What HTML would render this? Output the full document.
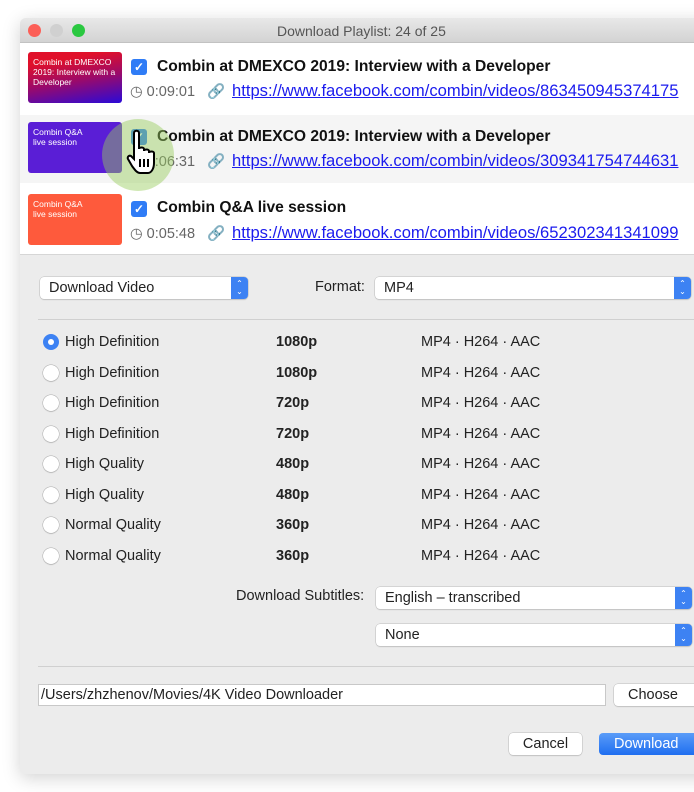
<!DOCTYPE html>
<html><head><style>
*{margin:0;padding:0;box-sizing:border-box}
body{width:694px;height:792px;background:#fff;position:relative;overflow:hidden;font-family:"Liberation Sans",sans-serif;}
.win{position:absolute;left:20px;top:18px;width:700px;height:756px;background:#ececec;border-radius:6px;box-shadow:0 4px 18px rgba(0,0,0,.18);overflow:hidden}
.title{position:absolute;left:0;top:0;width:100%;height:25px;background:linear-gradient(#e8e8e8,#d3d3d3);border-bottom:1px solid #c2c2c2;}
.title span{position:absolute;left:257px;top:5px;font-size:14px;color:#555}
.dot{position:absolute;top:6px;width:13px;height:13px;border-radius:50%}
.list{position:absolute;left:0;top:25px;width:100%;height:212px;background:#fff;border-bottom:1px solid #d6d6d6}
.a{position:absolute;}
.thumb{position:absolute;left:8px;width:94px;height:51px;border-radius:3px;color:#fff;font-size:8.5px;line-height:10px;padding:5px 5px}
.cb{position:absolute;left:111px;width:16px;height:16px;background:#2f7cf6;border-radius:3px;color:#fff;font-size:12px;line-height:16px;text-align:center;font-weight:bold}
.t{position:absolute;left:137px;font-size:15.6px;font-weight:bold;color:#111;white-space:nowrap}
.tm{position:absolute;left:110px;font-size:14.5px;color:#666;white-space:nowrap}
.u{position:absolute;left:212px;font-size:16.6px;color:#1b1bee;text-decoration:underline;white-space:nowrap}
.pop{position:absolute;height:22px;background:#fff;border-radius:4px;box-shadow:0 0 0 .5px #bbb,0 1px 1px rgba(0,0,0,.15);font-size:14.5px;color:#222;padding:3px 9px;white-space:nowrap}
.arr{position:absolute;right:0;top:0;width:17px;height:22px;background:#3d82f3;border-radius:0 4px 4px 0;color:#fff;font-size:8px;line-height:8px;text-align:center;padding-top:3px}
.r{position:absolute;font-size:14.5px;color:#222;white-space:nowrap}
.rad{position:absolute;left:23px;width:16px;height:16px;border-radius:50%;background:#fff;box-shadow:0 0 0 .5px #aaa,0 1px 1px rgba(0,0,0,.15)}
.sep{position:absolute;left:18px;width:700px;height:1px;background:#d0d0d0}
.btn{position:absolute;height:22px;background:#fff;border-radius:4px;box-shadow:0 0 0 .5px #bbb,0 1px 1px rgba(0,0,0,.15);font-size:14.5px;color:#222;text-align:center;line-height:22px}
</style></head><body>
<div class="win">
<div class="title">
<div class="dot" style="left:8px;background:#fc5f57"></div>
<div class="dot" style="left:30px;background:#d0d0d0"></div>
<div class="dot" style="left:52px;background:#2ac840"></div>
<span>Download Playlist: 24 of 25</span></div>
<div class="list">
<div class="a" style="left:0;top:72px;width:100%;height:68px;background:#f5f5f5"></div>
<div class="thumb" style="top:9px;background:linear-gradient(170deg,#e0102a 20%,#9b0a6a 55%,#2a0ad8 100%)">Combin at DMEXCO 2019: Interview with a Developer</div>
<div class="thumb" style="top:79px;background:#5a1ed6">Combin Q&amp;A<br>live session</div>
<div class="thumb" style="top:151px;background:#fe5a3c">Combin Q&amp;A<br>live session</div>
<div class="cb" style="top:16px">✓</div>
<div class="cb" style="top:86px">✓</div>
<div class="cb" style="top:158px">✓</div>
<div class="t" style="top:15px">Combin at DMEXCO 2019: Interview with a Developer</div>
<div class="t" style="top:85px">Combin at DMEXCO 2019: Interview with a Developer</div>
<div class="t" style="top:156px">Combin Q&amp;A live session</div>
<div class="tm" style="top:40px">◷ 0:09:01 &nbsp;&nbsp;🔗</div>
<div class="tm" style="top:110px">◷ 0:06:31 &nbsp;&nbsp;🔗</div>
<div class="tm" style="top:182px">◷ 0:05:48 &nbsp;&nbsp;🔗</div>
<div class="u" style="top:38px">https://www.facebook.com/combin/videos/863450945374175</div>
<div class="u" style="top:108px">https://www.facebook.com/combin/videos/309341754744631</div>
<div class="u" style="top:180px">https://www.facebook.com/combin/videos/652302341341099</div>
<div class="a" style="left:82px;top:76px;width:72px;height:72px;border-radius:50%;background:rgba(150,205,90,.45)"></div>
<svg class="a" style="left:106px;top:86px" width="30" height="48" viewBox="0 0 30 48"><path d="M8 4c0-3 5-3 5 0v16c0-2 5-2 5 0v2c0-2 5-2 5 0v2c0-2 5-2 5 0v10c0 6-3 10-6 10H14c-3 0-5-3-8-7L2 30c-1-2 1-4 3-3l3 3z" fill="#fff" stroke="#000" stroke-width="2"/><path d="M14 30v8M18 30v8M22 30v8" stroke="#000" stroke-width="2"/></svg>
</div>
<div class="pop" style="left:20px;top:259px;width:208px">Download Video<div class="arr">⌃<br>⌄</div></div>
<div class="r" style="left:295px;top:261px">Format:</div>
<div class="pop" style="left:355px;top:259px;width:316px">MP4<div class="arr">⌃<br>⌄</div></div>
<div class="sep" style="top:301px"></div>
<div class="rad" style="top:316px;background:#3d82f3;box-shadow:none"><div class="a" style="left:5px;top:5px;width:6px;height:6px;border-radius:50%;background:#fff"></div></div>
<div class="rad" style="top:347px"></div><div class="rad" style="top:377px"></div><div class="rad" style="top:408px"></div><div class="rad" style="top:438px"></div><div class="rad" style="top:469px"></div><div class="rad" style="top:499px"></div><div class="rad" style="top:530px"></div>
<div class="r" style="left:45px;top:309px;line-height:30.5px">High Definition<br>High Definition<br>High Definition<br>High Definition<br>High Quality<br>High Quality<br>Normal Quality<br>Normal Quality</div>
<div class="r" style="left:256px;top:309px;line-height:30.5px;font-weight:bold">1080p<br>1080p<br>720p<br>720p<br>480p<br>480p<br>360p<br>360p</div>
<div class="r" style="left:401px;top:309px;line-height:30.5px">MP4 · H264 · AAC<br>MP4 · H264 · AAC<br>MP4 · H264 · AAC<br>MP4 · H264 · AAC<br>MP4 · H264 · AAC<br>MP4 · H264 · AAC<br>MP4 · H264 · AAC<br>MP4 · H264 · AAC</div>
<div class="r" style="left:216px;top:570px">Download Subtitles:</div>
<div class="pop" style="left:356px;top:569px;width:316px">English – transcribed<div class="arr">⌃<br>⌄</div></div>
<div class="pop" style="left:356px;top:606px;width:316px">None<div class="arr">⌃<br>⌄</div></div>
<div class="sep" style="top:648px"></div>
<div class="a" style="left:18px;top:666px;width:568px;height:22px;background:#fff;border:1px solid #c8c8c8;font-size:14.5px;color:#222;padding:2px 2px">/Users/zhzhenov/Movies/4K Video Downloader</div>
<div class="btn" style="left:594px;top:666px;width:90px;text-align:left;padding-left:14px">Choose</div>
<div class="btn" style="left:489px;top:715px;width:73px">Cancel</div>
<div class="btn" style="left:579px;top:715px;width:100px;background:linear-gradient(#5a9cf8,#1f6ef0);color:#fff;box-shadow:none;text-align:left;padding-left:15px">Download</div>
</div>
</body></html>
